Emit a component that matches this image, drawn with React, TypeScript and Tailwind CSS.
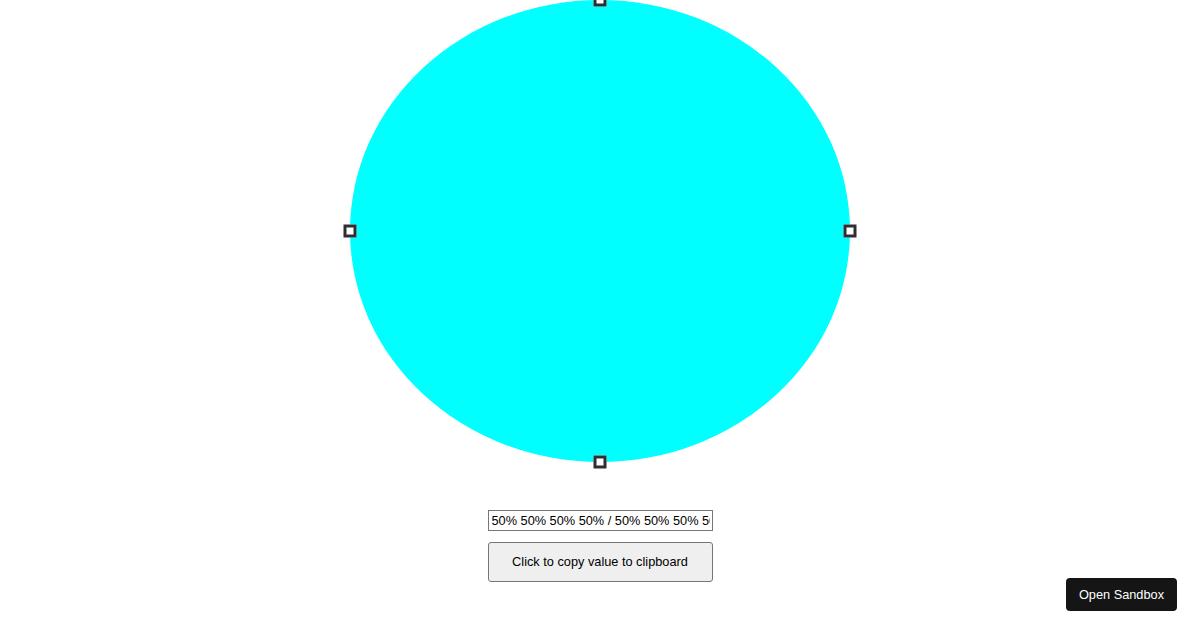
import React from "react";

const value = "50% 50% 50% 50% / 50% 50% 50% 50%";

function Handle({ className }: { className: string }) {
  return (
    <div
      className={`absolute w-[13px] h-[13px] bg-white border-[3px] border-[#2f2f2f] -translate-x-1/2 -translate-y-1/2 ${className}`}
    />
  );
}

export default function App() {
  return (
    <div className="relative w-[1200px] h-[630px] bg-white overflow-hidden font-['Liberation_Sans',Arial,sans-serif]">
      <div className="flex flex-col items-center">
        <div className="relative w-[500px] h-[462px]">
          <div className="w-full h-full bg-[#00ffff] rounded-[50%]" />
          <Handle className="left-1/2 top-0" />
          <Handle className="left-0 top-1/2" />
          <Handle className="left-full top-1/2" />
          <Handle className="left-1/2 top-full" />
        </div>
        <input
          readOnly
          value={value}
          className="mt-[48px] w-[225px] h-[21px] pl-[3px] pr-[2px] border border-[#767676] text-[12.75px] text-black bg-white outline-none"
        />
        <button className="mt-[11px] w-[225px] h-[40px] rounded-[3px] border border-[#767676] bg-[#efefef] text-[12.75px] text-black">
          Click to copy value to clipboard
        </button>
      </div>
      <button className="absolute right-[23px] bottom-[19px] w-[111px] h-[33px] rounded-[4px] bg-[#151515] text-white text-[12.75px]">
        Open Sandbox
      </button>
    </div>
  );
}
